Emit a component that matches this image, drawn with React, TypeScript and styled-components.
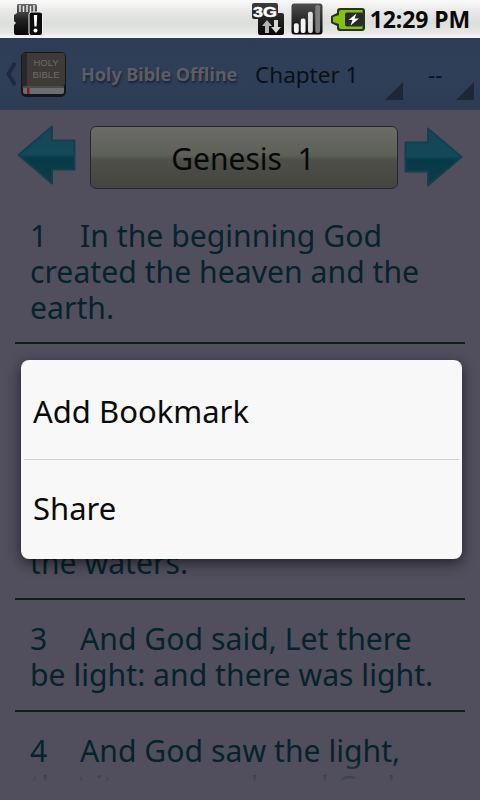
import React from 'react'
import styled, { createGlobalStyle } from 'styled-components'

const GlobalStyle = createGlobalStyle`
    html, body {
        margin: 0;
        padding: 0;
        background: #52505f;
        font-family: "Noto Sans", "Open Sans", sans-serif;
    }
`

const Screen = styled.div`
    width: 480px;
    height: 800px;
    overflow: hidden;
    display: flex;
    flex-direction: column;
    background: #514f5e;
`

const StatusBar = styled.div`
    height: 38px;
    flex: none;
    box-sizing: border-box;
    display: flex;
    align-items: center;
    padding: 0 10px 0 13px;
    background: linear-gradient(#f8f9f8 0%, #e8e9e7 30%, #dcdedb 60%, #e6e7e5 85%, #f5f6f5 100%);
`

const StatusIcons = styled.div`
    margin-left: auto;
    display: flex;
    align-items: center;
    gap: 7px;
`

const Clock = styled.span`
    font-weight: 700;
    font-size: 23px;
    color: #0a0a0a;
    letter-spacing: -0.1px;
    margin-left: -2px;
`

const Content = styled.div`
    position: relative;
    flex: 1;
    display: flex;
    flex-direction: column;
    min-height: 0;
`

const AppBar = styled.div`
    height: 72px;
    flex: none;
    box-sizing: border-box;
    display: flex;
    align-items: center;
    padding: 0 0 0 6px;
    background: linear-gradient(#2e3d55, #2f3f57 50%, #2d3c53);
`

const Chevron = styled.svg`
    flex: none;
    margin-right: 5px;
`

const Title = styled.span`
    flex: none;
    width: 156px;
    font-weight: 700;
    font-size: 18px;
    color: #5b5e66;
    text-shadow: 1px 2px 2px #1c2433;
    margin-left: 15px;
    white-space: nowrap;
`

const Spinner = styled.div<{ $width: number; $pad: number }>`
    position: relative;
    width: ${(p) => p.$width}px;
    height: 72px;
    flex: none;
    box-sizing: border-box;
    padding-left: ${(p) => p.$pad}px;
    display: flex;
    align-items: center;
    font-size: 22.500px;
    color: #0b0f16;
    white-space: nowrap;
    &::after {
        content: "";
        position: absolute;
        right: 0;
        bottom: 10px;
        width: 0;
        height: 0;
        border-style: solid;
        border-width: 0 0 18px 18px;
        border-color: transparent transparent #1e2735 transparent;
    }
`

const NavRow = styled.div`
    flex: none;
    display: flex;
    align-items: flex-start;
    height: 63px;
    margin-top: 16px;
    padding: 0 0 0 17px;
`

const ChapterButton = styled.div`
    flex: none;
    width: 308px;
    height: 63px;
    margin: 0 6px 0 14px;
    padding: 1px 2px 0 0;
    box-sizing: border-box;
    display: flex;
    align-items: center;
    justify-content: center;
    border: 1px solid #24282b;
    border-radius: 6px;
    font-size: 30px;
    color: #060808;
    white-space: pre;
    background: linear-gradient(#6b6d64 0%, #5d6057 46%, #4e4e4a 54%, #45463f 100%);
`

const Arrow = styled.svg<{ $flip?: boolean }>`
    flex: none;
    margin-top: ${(p) => (p.$flip ? '1px' : '-1px')};
    transform: ${(p) => (p.$flip ? 'scaleX(-1)' : 'none')};
`

const VerseArea = styled.div`
    position: relative;
    flex: 1;
    min-height: 0;
    margin-top: 8px;
    margin-bottom: 15px;
    overflow: hidden;
    &::after {
        content: "";
        position: absolute;
        left: 0;
        right: 0;
        bottom: 0;
        height: 24px;
        background: linear-gradient(rgba(81, 79, 94, 0), #514f5e 90%);
    }
`

const Verse = styled.div`
    margin: 0 15px;
    padding: 21px 15px 17px;
    border-bottom: 2px solid #0d1f12;
    font-size: 30.200px;
    line-height: 36px;
    color: #06232b;
    white-space: nowrap;
    &:first-child {
        padding-bottom: 16px;
    }
    &:last-child {
        border-bottom: none;
    }
`

const VerseNumber = styled.span`
    display: inline-block;
    width: 50px;
`

const Dialog = styled.div`
    position: absolute;
    left: 21px;
    top: 322px;
    width: 441px;
    height: 199px;
    display: flex;
    flex-direction: column;
    border-radius: 8px;
    background: #f8f8f8;
    box-shadow: 0 4px 14px rgba(0, 0, 0, 0.6);
`

const DialogItem = styled.div<{ $nudge: number }>`
    flex: 1;
    display: flex;
    align-items: center;
    box-sizing: border-box;
    padding: ${(p) => Math.max(p.$nudge, 0)}px 12px ${(p) => Math.max(-p.$nudge, 0)}px;
    font-size: 31px;
    color: #0a0a0a;
`

const DialogDivider = styled.div`
    flex: none;
    height: 1px;
    margin: 0 3px;
    background: #d2d2d2;
`

function SdCardIcon() {
    return (
        <svg width="30" height="33" viewBox="0 0 30 33">
            <defs>
                <linearGradient id="sd" x1="0" y1="0" x2="0" y2="1">
                    <stop offset="0" stopColor="#6a6a6a" />
                    <stop offset="0.5" stopColor="#222" />
                    <stop offset="1" stopColor="#050505" />
                </linearGradient>
            </defs>
            <path d="M5 1h17a2 2 0 0 1 2 2v7h-6v22H3a2 2 0 0 1-2-2v-8l2-2-2-2v-6l3-2V2z" fill="url(#sd)" />
            <path d="M7 2v7M10.500 3v6M14 2v7M17.500 3v6M21 2v7" stroke="#e8e8e8" strokeWidth="1.500" />
            <rect x="16" y="9" width="13.500" height="23.500" rx="2.500" fill="#0c0c0c" stroke="#f4f4f4" strokeWidth="1" />
            <path d="M20.800 12h3.400l-.6 11.500h-2.200z" fill="#fff" />
            <circle cx="22.500" cy="27.500" r="2" fill="#fff" />
        </svg>
    )
}

function NetworkIcon() {
    return (
        <svg width="32" height="32" viewBox="0 0 32 32">
            <defs>
                <linearGradient id="net" x1="0" y1="0" x2="0" y2="1">
                    <stop offset="0" stopColor="#3c3c3c" />
                    <stop offset="1" stopColor="#060606" />
                </linearGradient>
            </defs>
            <path d="M0 2a2 2 0 0 1 2-2h22a2 2 0 0 1 2 2v8h4a2 2 0 0 1 2 2v18a2 2 0 0 1-2 2H8a2 2 0 0 1-2-2V16H2a2 2 0 0 1-2-2z" fill="url(#net)" />
            <text x="1" y="14" fontSize="15.500" fontWeight="700" fill="#fff" stroke="#fff" strokeWidth="0.500" fontFamily="'Liberation Sans', sans-serif" textLength="24" lengthAdjust="spacingAndGlyphs">3G</text>
            <path d="M15 17l-5 6h3v7h4v-7h3z" fill="#b5b5b5" />
            <path d="M24 30l5-6h-3v-7h-4v7h-3z" fill="#d8d8d8" />
        </svg>
    )
}

function SignalIcon() {
    return (
        <svg width="32" height="32" viewBox="0 0 33 33">
            <defs>
                <linearGradient id="sig" x1="0" y1="0" x2="0" y2="1">
                    <stop offset="0" stopColor="#4e4e4e" />
                    <stop offset="1" stopColor="#060606" />
                </linearGradient>
            </defs>
            <rect x="0.500" y="0.500" width="32" height="32" rx="3" fill="url(#sig)" />
            <rect x="3" y="21" width="5" height="10" rx="2" fill="#f4f4f4" />
            <rect x="10" y="16" width="5" height="15" rx="2" fill="#f4f4f4" />
            <rect x="17.500" y="9" width="5" height="22" rx="2" fill="#e0e0e0" />
            <rect x="25" y="2" width="5" height="29" rx="2" fill="#7d7d7d" />
        </svg>
    )
}

function BatteryIcon() {
    return (
        <svg width="35" height="23" viewBox="0 0 35 23">
            <path d="M7 3a3 3 0 0 1 3-3h22a3 3 0 0 1 3 3v17a3 3 0 0 1-3 3H10a3 3 0 0 1-3-3v-2L1 15V8l6-3z" fill="#26331a" />
            <path d="M9 4a2 2 0 0 1 2-2h21.500v19H11a2 2 0 0 1-2-2v-3l-6-2V9l6-2z" fill="#86c20c" />
            <rect x="15" y="4.500" width="18" height="14" rx="2" fill="#2a2a2a" />
            <path d="M26.500 5.500l-8 6.500h4l-2 5.500 8.500-7h-4.500z" fill="#fff" />
        </svg>
    )
}

function BibleIcon() {
    return (
        <svg width="45" height="45" viewBox="0 0 45 45">
            <rect x="0" y="0" width="45" height="45" rx="5" fill="#14161b" />
            <rect x="1" y="1" width="43" height="33" rx="3" fill="#3d3a38" />
            <rect x="1" y="1" width="5" height="35" fill="#26282c" />
            <rect x="2" y="34" width="41" height="8" rx="2" fill="#6b6d6e" />
            <rect x="2" y="34" width="41" height="2" fill="#4a4b4c" />
            <rect x="6" y="36" width="2.500" height="6" fill="#8e1a1a" />
            <text x="25" y="14" fontSize="9.500" textAnchor="middle" fill="#6f6c68" fontFamily="'Liberation Sans', sans-serif">HOLY</text>
            <text x="25" y="25.500" fontSize="9.500" textAnchor="middle" fill="#6f6c68" fontFamily="'Liberation Sans', sans-serif">BIBLE</text>
        </svg>
    )
}

function BackChevron() {
    return (
        <Chevron width="10" height="24" viewBox="0 0 10 24">
            <path d="M9 1L2.500 12 9 23" fill="none" stroke="#1f2a3c" strokeWidth="4" />
        </Chevron>
    )
}

function ArrowIcon({ flip }: { flip?: boolean }) {
    const id = flip ? 'arrowRight' : 'arrowLeft'
    return (
        <Arrow $flip={flip} width="59" height="60" viewBox="0 0 59 60">
            <defs>
                <linearGradient id={id} x1="0" y1="0" x2="0" y2="1">
                    <stop offset="0" stopColor="#1a4452" />
                    <stop offset="0.48" stopColor="#124a59" />
                    <stop offset="0.56" stopColor="#063a49" />
                    <stop offset="1" stopColor="#0e3a47" />
                </linearGradient>
            </defs>
            <path d="M1.500 30L35 1.500V15.500h22.500v29H35V58.500z" fill={`url(#${id})`} stroke="#14404c" strokeWidth="2" strokeLinejoin="round" />
        </Arrow>
    )
}

const verses = [
    { n: 1, lines: ['In the beginning God', 'created the heaven and the', 'earth.'] },
    { n: 2, lines: ['And the earth was without', 'form, and void; and', 'darkness was upon the', 'face of the deep. And the', 'Spirit of God moved upon', 'the waters.'] },
    { n: 3, lines: ['And God said, Let there', 'be light: and there was light.'] },
    { n: 4, lines: ['And God saw the light,', 'that it was good: and God'] },
]

function App() {
    return (
        <Screen>
            <GlobalStyle />
            <StatusBar>
                <SdCardIcon />
                <StatusIcons>
                    <NetworkIcon />
                    <SignalIcon />
                    <BatteryIcon />
                    <Clock>12:29 PM</Clock>
                </StatusIcons>
            </StatusBar>
            <Content>
                <AppBar>
                    <BackChevron />
                    <BibleIcon />
                    <Title>Holy Bible Offline</Title>
                    <Spinner $width={166} $pad={18}>Chapter 1</Spinner>
                    <Spinner $width={71} $pad={25}>--</Spinner>
                </AppBar>
                <NavRow>
                    <ArrowIcon />
                    <ChapterButton>Genesis  1</ChapterButton>
                    <ArrowIcon flip />
                </NavRow>
                <VerseArea>
                    {verses.map((v) => (
                        <Verse key={v.n}>
                            <VerseNumber>{v.n}</VerseNumber>
                            {v.lines.map((line, i) => (
                                <React.Fragment key={i}>
                                    {i > 0 && <br />}
                                    {line}
                                </React.Fragment>
                            ))}
                        </Verse>
                    ))}
                </VerseArea>
                <Dialog>
                    <DialogItem $nudge={3}>Add Bookmark</DialogItem>
                    <DialogDivider />
                    <DialogItem $nudge={-3}>Share</DialogItem>
                </Dialog>
            </Content>
        </Screen>
    )
}

export default App
